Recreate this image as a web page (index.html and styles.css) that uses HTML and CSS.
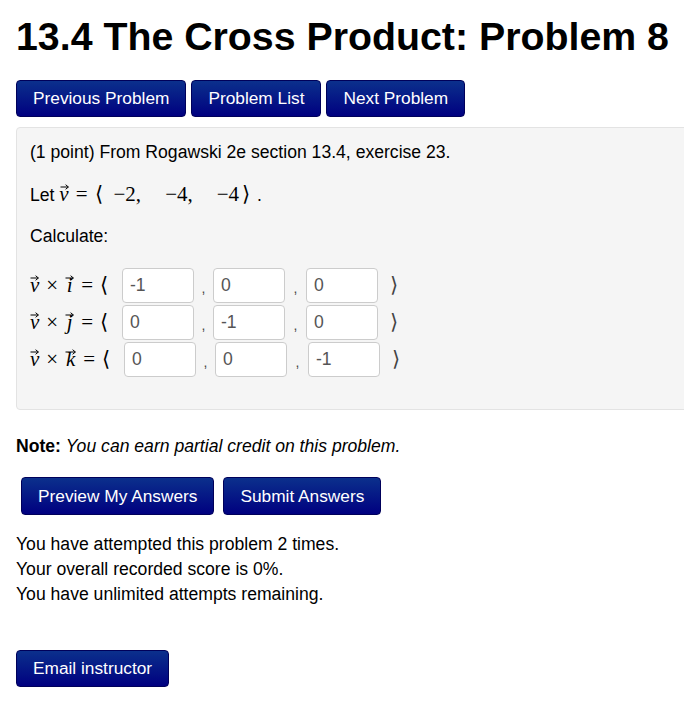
FILE: index.html
```html
<!DOCTYPE html>
<html lang="en">
<head>
    <meta charset="UTF-8">
    <title>13.4 The Cross Product: Problem 8</title>
    <link rel="stylesheet" href="styles.css">
</head>
<body>
    <h1>13.4 The Cross Product: Problem 8</h1>

    <div class="nav">
        <a class="btn" href="#">Previous Problem</a>
        <a class="btn" href="#">Problem List</a>
        <a class="btn" href="#">Next Problem</a>
    </div>

    <div class="problem">
        <p>(1 point) From Rogawski 2e section 13.4, exercise 23.</p>
        <p class="let">Let <span class="math"><span class="vec"><svg class="arr" width="9" height="6" viewBox="0 0 9 6"><path d="M0.5 3H8.3M5.6 0.7L8.4 3L5.6 5.3" fill="none" stroke="#000" stroke-width="1"/></svg><i>v</i></span><span class="mo">=</span><span class="open">&#x27E8;</span><span class="sep">&minus;2,</span><span class="sep">&minus;4,</span><span>&minus;4</span><span class="end">&#x27E9;</span></span><span class="dot">.</span></p>
        <p>Calculate:</p>

        <div class="rows">
            <div class="row">
                <span class="math lhs"><span class="vec"><svg class="arr" width="9" height="6" viewBox="0 0 9 6"><path d="M0.5 3H8.3M5.6 0.7L8.4 3L5.6 5.3" fill="none" stroke="#000" stroke-width="1"/></svg><i>v</i></span><span class="mo">&times;</span><span class="vec"><svg class="arr" width="9" height="6" viewBox="0 0 9 6"><path d="M0.5 3H8.3M5.6 0.7L8.4 3L5.6 5.3" fill="none" stroke="#000" stroke-width="1"/></svg><i>i</i></span><span class="mo">=</span>&#x27E8;</span>
                <input type="text" value="-1">
                <span class="comma">,</span>
                <input type="text" value="0">
                <span class="comma wide">,</span>
                <input type="text" value="0">
                <span class="math close">&#x27E9;</span>
            </div>
            <div class="row">
                <span class="math lhs"><span class="vec"><svg class="arr" width="9" height="6" viewBox="0 0 9 6"><path d="M0.5 3H8.3M5.6 0.7L8.4 3L5.6 5.3" fill="none" stroke="#000" stroke-width="1"/></svg><i>v</i></span><span class="mo">&times;</span><span class="vec"><svg class="arr" width="9" height="6" viewBox="0 0 9 6"><path d="M0.5 3H8.3M5.6 0.7L8.4 3L5.6 5.3" fill="none" stroke="#000" stroke-width="1"/></svg><i>j</i></span><span class="mo">=</span>&#x27E8;</span>
                <input type="text" value="0">
                <span class="comma">,</span>
                <input type="text" value="-1">
                <span class="comma wide">,</span>
                <input type="text" value="0">
                <span class="math close">&#x27E9;</span>
            </div>
            <div class="row">
                <span class="math lhs"><span class="vec"><svg class="arr" width="9" height="6" viewBox="0 0 9 6"><path d="M0.5 3H8.3M5.6 0.7L8.4 3L5.6 5.3" fill="none" stroke="#000" stroke-width="1"/></svg><i>v</i></span><span class="mo">&times;</span><span class="vec"><svg class="arr" width="11" height="6" viewBox="0 0 11 6"><path d="M0.5 3H10.3M7.6 0.7L10.4 3L7.6 5.3" fill="none" stroke="#000" stroke-width="1"/></svg><i>k</i></span><span class="mo">=</span>&#x27E8;</span>
                <input type="text" value="0">
                <span class="comma">,</span>
                <input type="text" value="0">
                <span class="comma wide">,</span>
                <input type="text" value="-1">
                <span class="math close">&#x27E9;</span>
            </div>
        </div>
    </div>

    <p class="note"><b>Note:</b> <i>You can earn partial credit on this problem.</i></p>

    <div class="submit">
        <button class="btn">Preview My Answers</button>
        <button class="btn">Submit Answers</button>
    </div>

    <div class="score">
        You have attempted this problem 2 times.<br>
        Your overall recorded score is 0%.<br>
        You have unlimited attempts remaining.
    </div>

    <div class="email">
        <button class="btn">Email instructor</button>
    </div>
</body>
</html>
```

FILE: styles.css
```css
body {
    font-family: "Liberation Sans", Arial, sans-serif;
    font-size: 17.6px;
    line-height: 25px;
    color: #000;
    margin: 0;
    padding: 0 16px;
    background-color: #fff;
    overflow: hidden;
}

h1 {
    font-size: 39.3px;
    font-weight: bold;
    margin: 0;
    padding-top: 14px;
    line-height: 44px;
    white-space: nowrap;
}

.btn {
    display: inline-block;
    font-family: "Liberation Sans", Arial, sans-serif;
    font-size: 17.3px;
    color: #fff;
    text-decoration: none;
    padding: 0 16px;
    height: 37px;
    line-height: 35px;
    border: 1px solid #00005a;
    border-radius: 4px;
    background: linear-gradient(#0b308c, #000080);
    box-sizing: border-box;
    cursor: pointer;
}

.nav {
    display: flex;
    gap: 5px;
    margin-top: 22px;
}

.problem {
    width: 700px;
    margin-top: 10px;
    padding: 12px 13px 32px;
    background-color: #f5f5f5;
    border: 1px solid #e3e3e3;
    border-radius: 4px;
    box-sizing: border-box;
}

.problem p {
    margin: 0 0 16px;
}

.problem .let {
    line-height: 26px;
}

.math {
    font-family: "Liberation Serif", "Times New Roman", serif;
    font-size: 21px;
}

.mo {
    margin: 0 7px;
}

.open {
    margin-right: 11px;
}

.sep {
    margin-right: 24px;
}

.end {
    margin-left: 3px;
}

.dot {
    margin-left: 7px;
}

.vec {
    display: inline-block;
    text-align: center;
    line-height: 16px;
}

.vec .arr {
    display: block;
    margin: 0 auto -4px;
}

.rows {
    display: flex;
    flex-direction: column;
    gap: 2px;
    margin-top: 19px;
}

.row {
    display: flex;
    align-items: center;
}

.lhs {
    margin-right: 14px;
}

.row input {
    width: 72px;
    height: 35px;
    box-sizing: border-box;
    border: 1px solid #ccc;
    border-radius: 4px;
    padding: 0 7px;
    font-family: "Liberation Sans", Arial, sans-serif;
    font-size: 17.6px;
    color: #555;
    background: #fff;
}

.comma {
    width: 19px;
    text-align: center;
    font-size: 14px;
    color: #444;
    padding-top: 6px;
}

.comma.wide {
    width: 21px;
}

.close {
    margin-left: 12px;
    color: #444;
}

.note {
    margin: 24px 0 18px;
}

.submit {
    display: flex;
    gap: 9px;
    padding-left: 5px;
}

.submit .btn {
    height: 38px;
}

.score {
    margin-top: 17px;
}

.email {
    margin-top: 43px;
}
```
